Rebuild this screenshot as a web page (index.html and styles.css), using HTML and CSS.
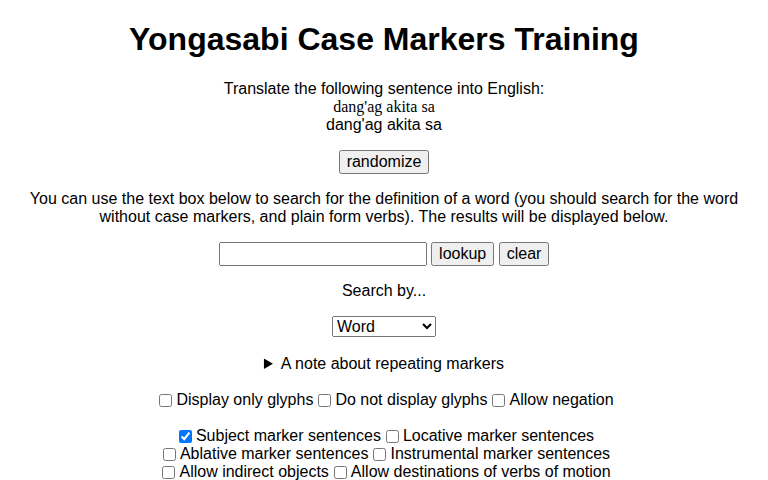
FILE: index.html
```html
<!DOCTYPE html>
<html>
<head>
<meta charset="utf-8">
<title>Yongasabi Case Markers Training</title>
<link rel="stylesheet" href="styles.css">
</head>
<body>
<h1 class="title">Yongasabi Case Markers Training</h1>
<p class="prompt">Translate the following sentence into English:<br>
<span class="glyphs">dang'ag akita sa</span><br>
<span class="romaji">dang'ag akita sa</span></p>
<p><button class="ctl">randomize</button></p>
<p>You can use the text box below to search for the definition of a word (you should search for the word without case markers, and plain form verbs). The results will be displayed below.</p>
<p><input class="ctl search" type="text"> <button class="ctl">lookup</button> <button class="ctl">clear</button></p>
<p>Search by...</p>
<p><select class="ctl pick"><option>Word</option><option>Definition</option></select></p>
<details class="note"><summary>A note about repeating markers</summary><p>Markers may repeat.</p></details>
<p class="opts"><input class="cb" type="checkbox">Display only glyphs<input class="cb" type="checkbox">Do not display glyphs<input class="cb" type="checkbox">Allow negation</p>
<p class="opts"><input class="cb" type="checkbox" checked>Subject marker sentences<input class="cb" type="checkbox">Locative marker sentences<br><input class="cb" type="checkbox">Ablative marker sentences<input class="cb" type="checkbox">Instrumental marker sentences<br><input class="cb" type="checkbox">Allow indirect objects<input class="cb" type="checkbox">Allow destinations of verbs of motion</p>
</body>
</html>
```

FILE: styles.css
```css
body {
  margin: 0 8px 8px;
  font-family: "Liberation Sans", Arial, sans-serif;
  font-size: 16px;
  text-align: center;
  color: #000;
  background: #fff;
}
.glyphs {
  font-family: "Liberation Serif", "Times New Roman", serif;
}
.ctl {
  font-family: "Liberation Sans", Arial, sans-serif;
  font-size: 16px;
}
.search {
  box-sizing: border-box;
  width: 208px;
}
.pick {
  width: 104px;
}
.note {
  padding-top: 2px;
}
.opts {
  padding-top: 2px;
}
.cb {
  margin: 0 4px 0 5px;
  vertical-align: -2px;
}
```
